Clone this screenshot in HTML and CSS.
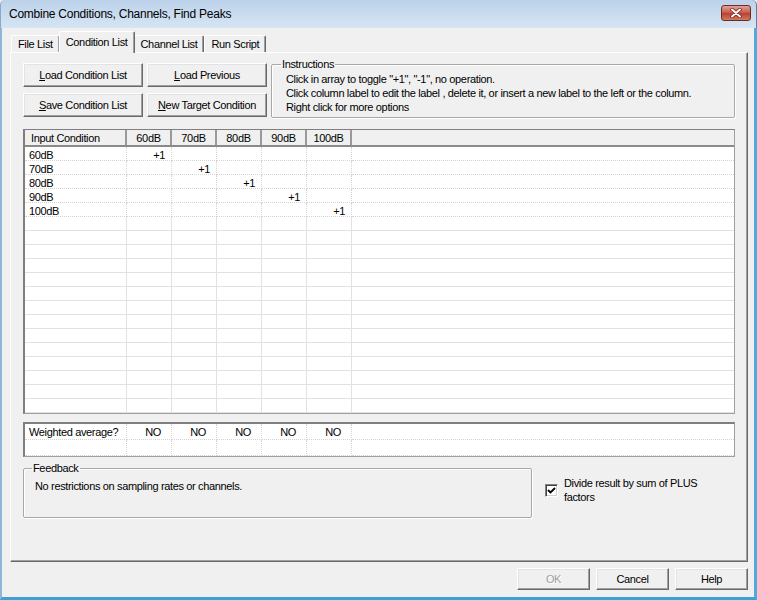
FILE: index.html
```html
<!DOCTYPE html>
<html lang="en">
<head>
    <meta charset="UTF-8">
    <title>Combine Conditions, Channels, Find Peaks</title>
    <link rel="stylesheet" href="styles.css">
</head>
<body>
<div class="window">
    <div class="titlebar">
        <span class="title">Combine Conditions, Channels, Find Peaks</span>
        <div class="close-btn">
            <svg width="14" height="10" viewBox="0 0 14 10">
                <path d="M3 1.5 L11 8.5 M11 1.5 L3 8.5" stroke="#6b1d16" stroke-width="3.4" stroke-linecap="round"/>
                <path d="M3 1.5 L11 8.5 M11 1.5 L3 8.5" stroke="#fff" stroke-width="2" stroke-linecap="round"/>
            </svg>
        </div>
    </div>

    <div class="client">
        <div class="tabs">
            <div class="tab">File List</div>
            <div class="tab selected">Condition List</div>
            <div class="tab">Channel List</div>
            <div class="tab">Run Script</div>
        </div>

        <div class="panel">
            <div class="top-row">
                <div class="actions">
                    <button class="btn"><u>L</u>oad Condition List</button>
                    <button class="btn"><u>L</u>oad Previous</button>
                    <button class="btn"><u>S</u>ave Condition List</button>
                    <button class="btn"><u>N</u>ew Target Condition</button>
                </div>
                <fieldset class="group instructions">
                    <legend>Instructions</legend>
                    <p>Click in array to toggle "+1", "-1", no operation.</p>
                    <p>Click column label to edit the label , delete it, or insert a new label to the left or the column.</p>
                    <p>Right click for more options</p>
                </fieldset>
            </div>

            <div class="grid main-grid">
                <div class="row head">
                    <div class="cell first">Input Condition</div>
                    <div class="cell">60dB</div>
                    <div class="cell">70dB</div>
                    <div class="cell">80dB</div>
                    <div class="cell">90dB</div>
                    <div class="cell">100dB</div>
                    <div class="cell rest"></div>
                </div>
                <div class="row"><div class="cell first">60dB</div><div class="cell">+1</div><div class="cell"></div><div class="cell"></div><div class="cell"></div><div class="cell"></div><div class="cell rest"></div></div>
                <div class="row"><div class="cell first">70dB</div><div class="cell"></div><div class="cell">+1</div><div class="cell"></div><div class="cell"></div><div class="cell"></div><div class="cell rest"></div></div>
                <div class="row"><div class="cell first">80dB</div><div class="cell"></div><div class="cell"></div><div class="cell">+1</div><div class="cell"></div><div class="cell"></div><div class="cell rest"></div></div>
                <div class="row"><div class="cell first">90dB</div><div class="cell"></div><div class="cell"></div><div class="cell"></div><div class="cell">+1</div><div class="cell"></div><div class="cell rest"></div></div>
                <div class="row"><div class="cell first">100dB</div><div class="cell"></div><div class="cell"></div><div class="cell"></div><div class="cell"></div><div class="cell">+1</div><div class="cell rest"></div></div>
                <div class="empty-rows"></div>
            </div>

            <div class="grid avg-grid">
                <div class="row tall"><div class="cell first">Weighted average?</div><div class="cell">NO</div><div class="cell">NO</div><div class="cell">NO</div><div class="cell">NO</div><div class="cell">NO</div><div class="cell rest"></div></div>
                <div class="row tall"><div class="cell first"></div><div class="cell"></div><div class="cell"></div><div class="cell"></div><div class="cell"></div><div class="cell"></div><div class="cell rest"></div></div>
            </div>

            <div class="bottom-row">
                <fieldset class="group feedback">
                    <legend>Feedback</legend>
                    <p>No restrictions on sampling rates or channels.</p>
                </fieldset>
                <label class="check">
                    <span class="box">
                        <svg width="9" height="9" viewBox="0 0 9 9"><path d="M1 4 L3.5 6.5 L8 2" fill="none" stroke="#000" stroke-width="1.8"/></svg>
                    </span>
                    <span class="check-text">Divide result by sum of PLUS factors</span>
                </label>
            </div>
        </div>

        <div class="dialog-buttons">
            <button class="btn disabled">OK</button>
            <button class="btn">Cancel</button>
            <button class="btn">Help</button>
        </div>
    </div>
</div>
</body>
</html>
```

FILE: styles.css
```css
* {
    box-sizing: border-box;
}
body {
    margin: 0;
    background: #f0f0f0;
    font-family: "Liberation Sans", Arial, sans-serif;
    font-size: 11px;
    letter-spacing: -0.35px;
    color: #000;
}
.window {
    width: 757px;
    height: 600px;
    display: flex;
    flex-direction: column;
    background: #f0f0f0;
}
.titlebar {
    height: 28px;
    flex-shrink: 0;
    display: flex;
    justify-content: space-between;
    align-items: flex-start;
    padding: 0 5px 0 8px;
    background: linear-gradient(to bottom, #bcd2ea, #d6e5f4);
    border-left: 1px solid #8aa9c8;
    border-right: 1px solid #5a7fa5;
    border-radius: 5px 5px 0 0;
}
.title {
    font-size: 12px;
    letter-spacing: -0.25px;
    line-height: 28px;
}
.close-btn {
    width: 30px;
    height: 16px;
    margin-top: 5px;
    display: flex;
    align-items: center;
    justify-content: center;
    border: 1px solid #6e2a24;
    border-radius: 3px;
    background: linear-gradient(to bottom, #e3a296, #c8574a 50%, #b63e30 51%, #d27a5c);
}
.client {
    flex: 1;
    display: flex;
    flex-direction: column;
    padding: 3px 6px 0 8px;
    border-left: 2px solid #8fb6da;
    border-right: 3px solid #55a8dc;
    border-bottom: 3px solid #3da1d8;
}

/* tabs */
.tabs {
    height: 21px;
    display: flex;
    align-items: flex-end;
    padding-left: 1px;
}
.tab {
    height: 17px;
    line-height: 16px;
    padding: 0 6px;
    border: 1px solid #fff;
    border-bottom: none;
    border-right-color: #696969;
    border-radius: 2px 2px 0 0;
    box-shadow: inset -1px 0 0 #a0a0a0;
}
.tab.selected {
    height: 22px;
    line-height: 20px;
    margin: 0 -1px -1px;
    padding: 0 6px;
    position: relative;
    z-index: 1;
    background: #f0f0f0;
}

/* main tab panel */
.panel {
    height: 510px;
    padding: 10px 12px 0 12px;
    border: 1px solid #fff;
    border-right-color: #696969;
    border-bottom-color: #696969;
    box-shadow: inset -1px -1px 0 #a0a0a0;
}
.top-row {
    display: flex;
    gap: 4px;
    height: 55px;
}
.actions {
    display: grid;
    grid-template-columns: 120px 120px;
    grid-auto-rows: 24px;
    gap: 6px 4px;
}
.btn {
    font: inherit;
    letter-spacing: inherit;
    color: #000;
    padding: 0;
    background: #f0f0f0;
    border: 1px solid #fff;
    border-right-color: #696969;
    border-bottom-color: #696969;
    box-shadow: inset -1px -1px 0 #a0a0a0, inset 1px 1px 0 #e3e3e3;
}
.btn.disabled {
    color: #a0a0a0;
    text-shadow: 1px 1px 0 #fff;
}
.group {
    margin: 0;
    border: 1px solid #a8a8a8;
    border-radius: 2px;
    box-shadow: 1px 1px 0 #fff, inset 1px 1px 0 #fff;
}
.group legend {
    padding: 0 1px;
    line-height: 13px;
}
.group p {
    margin: 0;
    line-height: 14px;
    white-space: nowrap;
}
.instructions {
    flex: 1;
    margin-top: -5px;
    padding: 1px 8px 2px 9px;
}
.instructions p {
    margin-left: 5px;
}

/* condition grid */
.grid {
    background: #fff;
    border: 1px solid #a0a0a0;
    border-left: 2px solid #7f7f7f;
    border-top: 1px solid #7f7f7f;
}
.main-grid {
    margin-top: 11px;
}
.row {
    display: grid;
    grid-template-columns: 102px repeat(5, 45px) 1fr;
    height: 14px;
}
.cell {
    border-right: 1px dotted #d4d4d4;
    border-bottom: 1px dotted #d4d4d4;
    line-height: 17px;
    height: 14px;
    overflow: hidden;
    text-align: right;
    padding-right: 6px;
    white-space: nowrap;
}
.cell.first {
    text-align: left;
    padding-left: 4px;
}
.cell.rest {
    border-right: none;
}
.row.head {
    height: 17px;
    background: #f0f0f0;
    border-bottom: 2px solid #8a8a8a;
}
.row.head .cell {
    height: 15px;
    border-right: 2px solid #9a9a9a;
    border-bottom: none;
    text-align: center;
    padding: 0;
    line-height: 16px;
}
.row.head .cell.first {
    text-align: left;
    padding-left: 6px;
}
.row.head .cell.rest {
    border-right: none;
}
.empty-rows {
    height: 196px;
    background:
        linear-gradient(to right, transparent 101px, #e2e2e2 101px, #e2e2e2 102px, transparent 102px,
            transparent 146px, #e2e2e2 146px, #e2e2e2 147px, transparent 147px,
            transparent 191px, #e2e2e2 191px, #e2e2e2 192px, transparent 192px,
            transparent 236px, #e2e2e2 236px, #e2e2e2 237px, transparent 237px,
            transparent 281px, #e2e2e2 281px, #e2e2e2 282px, transparent 282px,
            transparent 326px, #e2e2e2 326px, #e2e2e2 327px, transparent 327px),
        repeating-linear-gradient(to bottom, transparent 0, transparent 13px, #e2e2e2 13px, #e2e2e2 14px);
}
.avg-grid {
    margin-top: 8px;
    border-top: 2px solid #7f7f7f;
}
.row.tall {
    height: 16px;
}
.row.tall .cell {
    height: 16px;
    line-height: 16px;
    padding-right: 10px;
}
.row.tall .cell.first {
    padding-left: 4px;
}

/* feedback + checkbox */
.bottom-row {
    display: flex;
    margin-top: 5px;
}
.feedback {
    width: 509px;
    height: 56px;
    padding: 0 8px 0 8px;
}
.feedback p {
    margin: 4px 0 0 3px;
}
.check {
    display: flex;
    gap: 6px;
    margin: 14px 0 0 13px;
}
.box {
    width: 13px;
    height: 13px;
    margin-top: 8px;
    flex-shrink: 0;
    display: flex;
    align-items: center;
    justify-content: center;
    background: #fff;
    border: 1px solid #808080;
    border-right-color: #fff;
    border-bottom-color: #fff;
    box-shadow: inset 1px 1px 0 #404040, inset -1px -1px 0 #d4d0c8;
}
.check-text {
    width: 140px;
    line-height: 14px;
}

/* OK / Cancel / Help */
.dialog-buttons {
    display: flex;
    justify-content: flex-end;
    gap: 6px;
    margin-top: 6px;
}
.dialog-buttons .btn {
    width: 73px;
    height: 22px;
}
```
